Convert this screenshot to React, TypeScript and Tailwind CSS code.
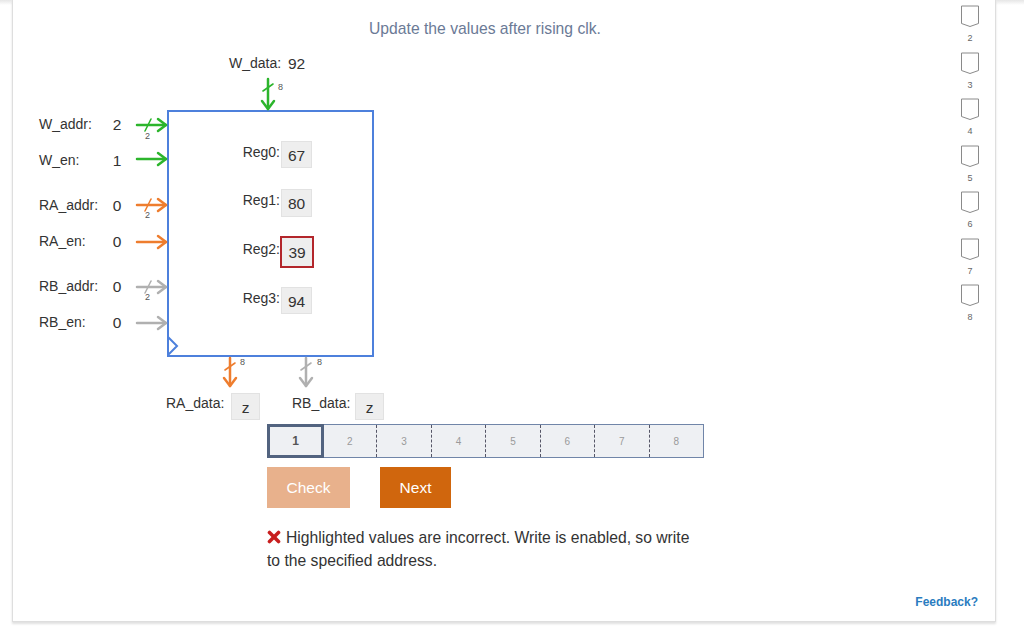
import React from "react";

const GREEN = "#2cb52c";
const ORANGE = "#ee7d2e";
const GRAY = "#b0b0b0";

// canvas origin in page coords
const OX = 12;
const OY = 45;

function HArrow({ y, color, bus }: { y: number; color: string; bus?: boolean }) {
  return (
    <g stroke={color} strokeWidth={2.5} fill="none" strokeLinecap="round" strokeLinejoin="round">
      <line x1={136} y1={y} x2={165} y2={y} />
      <polyline points={`157,${y - 6} 165,${y} 157,${y + 6}`} />
      {bus && <line x1={144} y1={y + 6} x2={150} y2={y - 6} strokeWidth={1.6} />}
    </g>
  );
}

function VArrow({ x, y1, y2, color }: { x: number; y1: number; y2: number; color: string }) {
  return (
    <g stroke={color} strokeWidth={2.5} fill="none" strokeLinecap="round" strokeLinejoin="round">
      <line x1={x} y1={y1} x2={x} y2={y2} />
      <polyline points={`${x - 6},${y2 - 8} ${x},${y2} ${x + 6},${y2 - 8}`} />
      <line x1={x - 5} y1={y1 + 12} x2={x + 5} y2={y1 + 5} strokeWidth={1.6} />
    </g>
  );
}

function Lbl({ x, cy, children, w }: { x: number; cy: number; children: React.ReactNode; w?: number }) {
  return (
    <div
      className="absolute text-[14px] leading-[16px] text-[#333] whitespace-nowrap"
      style={{ left: x - OX, top: cy - 8 - OY, width: w, textAlign: w ? "right" : undefined }}
    >
      {children}
    </div>
  );
}

function Val({ cx, cy, children }: { cx: number; cy: number; children: React.ReactNode }) {
  return (
    <div
      className="absolute w-[20px] text-center text-[15.5px] leading-[18px] text-[#333]"
      style={{ left: cx - 10 - OX, top: cy - 9 - OY }}
    >
      {children}
    </div>
  );
}

function Box({ x, y, w, h, children, red }: { x: number; y: number; w: number; h: number; children: React.ReactNode; red?: boolean }) {
  return (
    <div
      className={
        "absolute flex items-center justify-center bg-[#eeeeee] text-[15.5px] leading-[18px] text-[#333] pt-[2px] " +
        (red ? "border-2 border-[#b3262b]" : "border border-[#e2e2e2]")
      }
      style={{ left: x - OX, top: y - OY, width: w, height: h }}
    >
      {children}
    </div>
  );
}

function Small({ x, cy, children }: { x: number; cy: number; children: React.ReactNode }) {
  return (
    <div
      className="absolute text-[9px] leading-[10px] text-[#555]"
      style={{ left: x - OX, top: cy - 5 - OY }}
    >
      {children}
    </div>
  );
}

function Bookmark({ n }: { n: number }) {
  return (
    <div className="flex h-[46.5px] flex-col items-center">
      <svg width="20" height="23" viewBox="0 0 20 23">
        <path d="M1.5 1 H18.5 V18.5 L10 21.5 L1.5 18.5 Z" fill="white" stroke="#8a8a8a" strokeWidth="1" />
      </svg>
      <div className="mt-[4px] text-[9px] leading-[12px] text-[#666]">{n}</div>
    </div>
  );
}

export default function App() {
  const steps = [1, 2, 3, 4, 5, 6, 7, 8];
  return (
    <div
      className="relative h-[635px] w-[1024px] overflow-hidden bg-white"
      style={{ fontFamily: '"Liberation Sans", Arial, "DejaVu Sans", sans-serif' }}
    >
      <div className="h-[5px] w-full bg-gradient-to-b from-[#e6e6e6] to-white" />
      <div className="absolute left-[12px] top-0 flex h-[622px] w-[984px] flex-col border-x border-b border-[#dedede] bg-white shadow-[0_2px_2px_rgba(0,0,0,0.12)]">
        <div className="flex">
          {/* main column */}
          <div className="w-[932px]">
            <div className="h-[45px] pl-[12px] pt-[20px] text-center text-[15.7px] leading-[18px] text-[#6b7a96]">
              Update the values after rising clk.
            </div>

            {/* diagram canvas */}
            <div className="relative h-[379px]">
              <svg
                className="absolute left-0 top-0"
                width="932"
                height="379"
                viewBox={`${OX} ${OY} 932 379`}
              >
                <rect x={167} y={111} width={205} height={245} fill="none" stroke="#4d80dc" strokeWidth={2} />
                <polyline points="167,337 176,346 167,355" fill="none" stroke="#4d80dc" strokeWidth={2} />
                <HArrow y={125} color={GREEN} bus />
                <HArrow y={159} color={GREEN} />
                <HArrow y={205} color={ORANGE} bus />
                <HArrow y={242} color={ORANGE} />
                <HArrow y={287} color={GRAY} bus />
                <HArrow y={323} color={GRAY} />
                <VArrow x={267} y1={79} y2={109} color={GREEN} />
                <VArrow x={229} y1={358} y2={386} color={ORANGE} />
                <VArrow x={305} y1={358} y2={386} color={GRAY} />
              </svg>

              <Lbl x={228} cy={63}>W_data:</Lbl>
              <div className="absolute text-[15.5px] leading-[18px] text-[#333]" style={{ left: 287 - OX, top: 64 - 9 - OY }}>
                92
              </div>
              <Small x={277} cy={87}>8</Small>

              <Lbl x={38} cy={124}>W_addr:</Lbl>
              <Val cx={116} cy={125}>2</Val>
              <Small x={144} cy={136}>2</Small>
              <Lbl x={38} cy={160}>W_en:</Lbl>
              <Val cx={116} cy={161}>1</Val>
              <Lbl x={38} cy={205}>RA_addr:</Lbl>
              <Val cx={116} cy={206}>0</Val>
              <Small x={144} cy={215}>2</Small>
              <Lbl x={38} cy={241}>RA_en:</Lbl>
              <Val cx={116} cy={242}>0</Val>
              <Lbl x={38} cy={286}>RB_addr:</Lbl>
              <Val cx={116} cy={287}>0</Val>
              <Small x={144} cy={297}>2</Small>
              <Lbl x={38} cy={322}>RB_en:</Lbl>
              <Val cx={116} cy={323}>0</Val>

              <Lbl x={218} cy={152} w={61}>Reg0:</Lbl>
              <Box x={280} y={141} w={31} h={27}>67</Box>
              <Lbl x={218} cy={200} w={61}>Reg1:</Lbl>
              <Box x={280} y={189} w={31} h={28}>80</Box>
              <Lbl x={218} cy={249} w={61}>Reg2:</Lbl>
              <Box x={279} y={236} w={34} h={32} red>39</Box>
              <Lbl x={218} cy={298} w={61}>Reg3:</Lbl>
              <Box x={280} y={287} w={31} h={27}>94</Box>

              <Small x={239} cy={362}>8</Small>
              <Small x={316} cy={362}>8</Small>

              <Lbl x={165} cy={403}>RA_data:</Lbl>
              <Box x={230} y={393} w={29} h={27}>z</Box>
              <Lbl x={291} cy={403}>RB_data:</Lbl>
              <Box x={354} y={393} w={29} h={27}>z</Box>
            </div>

            {/* steps, buttons, message */}
            <div className="ml-[254px] w-[437px]">
              <div className="flex h-[34px] border border-[#7085a8] bg-[#eef0f3]">
                {steps.map((s) =>
                  s === 1 ? (
                    <div
                      key={s}
                      className="flex w-[57px] items-center justify-center border-[3px] border-[#52637f] text-[12px] font-bold text-[#555] -m-px"
                    >
                      1
                    </div>
                  ) : (
                    <div
                      key={s}
                      className={
                        "flex flex-1 items-center justify-center text-[10px] text-[#9a9a9a] " +
                        (s > 2 ? "border-l border-dashed border-[#556]" : "")
                      }
                    >
                      {s}
                    </div>
                  )
                )}
              </div>
              <div className="mt-[9px] flex gap-[30px]">
                <div className="flex h-[41px] w-[83px] items-center justify-center bg-[#e8b18c] text-[15.5px] text-white">
                  Check
                </div>
                <div className="flex h-[41px] w-[71px] items-center justify-center bg-[#d0660d] text-[15.5px] text-white">
                  Next
                </div>
              </div>
              <div className="mt-[18px] w-[432px] text-[15.7px] leading-[23px] text-[#333]">
                <svg width="14" height="14" viewBox="0 0 14 14" className="mr-[5px] inline-block align-[-1px]">
                  <g stroke="#c81e1e" strokeWidth="3.6" strokeLinecap="round">
                    <line x1="2.5" y1="2.5" x2="11.5" y2="11.5" />
                    <line x1="11.5" y1="2.5" x2="2.5" y2="11.5" />
                  </g>
                </svg>
                Highlighted values are incorrect. Write is enabled, so write to the specified address.
              </div>
            </div>
          </div>

          {/* sidebar */}
          <div className="flex w-[50px] flex-col items-center pt-[5px]">
            {[2, 3, 4, 5, 6, 7, 8].map((n) => (
              <Bookmark key={n} n={n} />
            ))}
          </div>
        </div>
        <div className="mt-auto flex justify-end pb-[11px] pr-[17px]">
          <span className="text-[12px] font-bold leading-[16px] text-[#2a7cc0]">Feedback?</span>
        </div>
      </div>
    </div>
  );
}
